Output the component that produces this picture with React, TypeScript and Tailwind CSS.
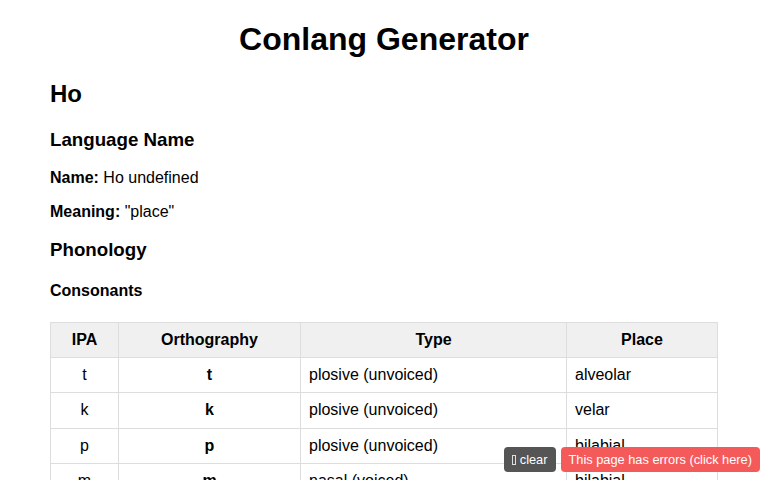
import React from "react";

const rows = [
  { ipa: "t", orth: "t", type: "plosive (unvoiced)", place: "alveolar" },
  { ipa: "k", orth: "k", type: "plosive (unvoiced)", place: "velar" },
  { ipa: "p", orth: "p", type: "plosive (unvoiced)", place: "bilabial" },
  { ipa: "m", orth: "m", type: "nasal (voiced)", place: "bilabial" },
  { ipa: "n", orth: "n", type: "nasal (voiced)", place: "alveolar" },
  { ipa: "s", orth: "s", type: "fricative (unvoiced)", place: "alveolar" },
];

export default function App() {
  return (
    <div className="min-h-screen bg-white text-black font-['Liberation_Sans',Arial,sans-serif]">
      <div className="px-[50px] pt-[21.44px] pb-10">
        <h1 className="text-[32px] leading-[36.8px] font-bold text-center mb-[21.44px]">Conlang Generator</h1>
        <h2 className="text-[24px] leading-[27.6px] font-bold mb-[21.92px]">Ho</h2>
        <h3 className="text-[18.72px] leading-[21.5px] font-bold mb-[18.72px]">Language Name</h3>
        <p className="text-[16px] leading-[18.4px] mb-[15.5px]">
          <b>Name:</b> Ho undefined
        </p>
        <p className="text-[16px] leading-[18.4px] mb-[17px]">
          <b>Meaning:</b> "place"
        </p>
        <h3 className="text-[18.72px] leading-[21.5px] font-bold mb-[22.28px]">Phonology</h3>
        <h4 className="text-[16px] leading-[18.4px] font-bold mb-[20.8px]">Consonants</h4>
        <table className="w-full border-collapse text-[16px] leading-[18.4px]">
          <thead>
            <tr className="bg-[#f0f0f0]">
              <th className="border border-[#dddddd] px-2 py-2 w-[68px]">IPA</th>
              <th className="border border-[#dddddd] px-2 py-2 w-[182px]">Orthography</th>
              <th className="border border-[#dddddd] px-2 py-2 w-[266px]">Type</th>
              <th className="border border-[#dddddd] px-2 py-2">Place</th>
            </tr>
          </thead>
          <tbody>
            {rows.map((r) => (
              <tr key={r.ipa}>
                <td className="border border-[#dddddd] px-2 py-2 text-center">{r.ipa}</td>
                <td className="border border-[#dddddd] px-2 py-2 text-center font-bold">{r.orth}</td>
                <td className="border border-[#dddddd] px-2 py-2">{r.type}</td>
                <td className="border border-[#dddddd] px-2 py-2">{r.place}</td>
              </tr>
            ))}
          </tbody>
        </table>
      </div>
      <div className="fixed bottom-2 right-2 flex gap-[5px] text-[12.8px] leading-[25px]">
        <button className="h-[25px] px-2 rounded-[4px] bg-[#555555] text-white flex items-center gap-[4px]">
          <span className="inline-block w-[4px] h-[10px] border border-white/80"></span>
          clear
        </button>
        <button className="h-[25px] px-2 rounded-[4px] bg-[#f55a5a] text-white">
          This page has errors (click here)
        </button>
      </div>
    </div>
  );
}
